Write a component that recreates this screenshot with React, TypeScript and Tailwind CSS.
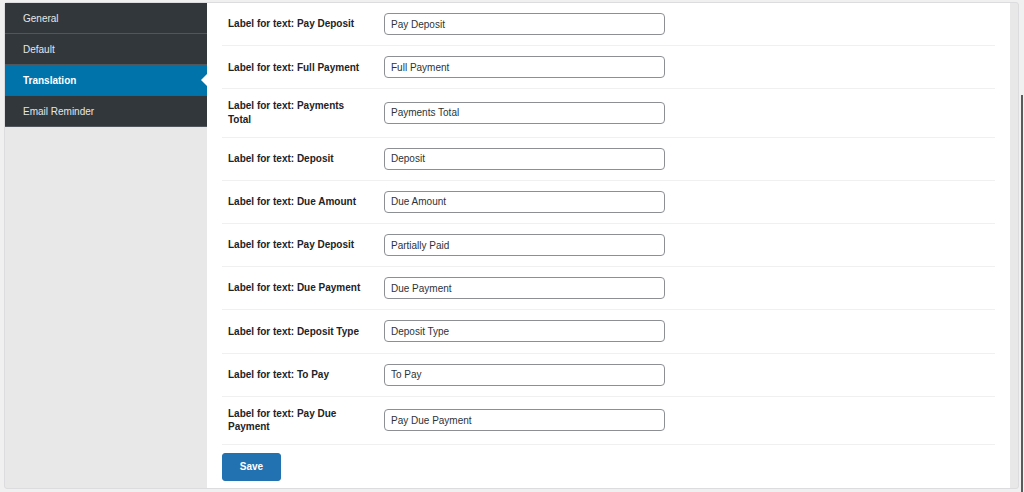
import React from 'react';

const tabs = ['General', 'Default', 'Translation', 'Email Reminder'];

const rows: Array<{ label: string; value: string }> = [
  { label: 'Label for text: Pay Deposit', value: 'Pay Deposit' },
  { label: 'Label for text: Full Payment', value: 'Full Payment' },
  { label: 'Label for text: Payments Total', value: 'Payments Total' },
  { label: 'Label for text: Deposit', value: 'Deposit' },
  { label: 'Label for text: Due Amount', value: 'Due Amount' },
  { label: 'Label for text: Pay Deposit', value: 'Partially Paid' },
  { label: 'Label for text: Due Payment', value: 'Due Payment' },
  { label: 'Label for text: Deposit Type', value: 'Deposit Type' },
  { label: 'Label for text: To Pay', value: 'To Pay' },
  { label: 'Label for text: Pay Due Payment', value: 'Pay Due Payment' },
];

export default function App() {
  return (
    <div
      className="relative h-[492px] overflow-hidden bg-[#f0f0f1] pt-[2px] pl-[4px] pr-[5px] text-[10px]"
      style={{ fontFamily: '"Liberation Sans", Arial, sans-serif' }}
    >
      {/* Settings box */}
      <div className="flex h-[487px] rounded-[3px] border border-[#dcdcde] bg-[#e8e8e8] pr-[8px]">
        {/* Sidebar tabs */}
        <div className="w-[202px] flex-shrink-0">
          {tabs.map((t) => (
            <div
              key={t}
              className={`relative flex h-[31px] items-center border-b border-[#50565c] pl-[18px] ${
                t === 'Translation' ? 'bg-[#0073aa] font-bold text-white' : 'bg-[#32373c] text-[#e6e6e6]'
              }`}
            >
              {t}
              {t === 'Translation' && (
                <span className="absolute right-0 top-1/2 h-0 w-0 -translate-y-1/2 border-y-[6px] border-r-[6px] border-y-transparent border-r-white" />
              )}
            </div>
          ))}
        </div>

        {/* Content panel */}
        <div className="flex flex-1 flex-col bg-white px-[15px]">
          {rows.map((r, i) => (
            <div key={i} className="flex items-center border-b border-[#f0f0f1] py-[10.1px]">
              <div className="w-[162px] flex-shrink-0 pl-[6px]">
                <div className="w-[140px] font-bold leading-[13.5px] text-[#1d2327]">{r.label}</div>
              </div>
              <input
                type="text"
                defaultValue={r.value}
                className="h-[22px] w-[281px] rounded-[4px] border border-[#8c8f94] bg-white px-[6px] text-[10px] text-[#2c3338] outline-none"
              />
            </div>
          ))}
          <div className="pt-[8px]">
            <button className="h-[28px] w-[59px] rounded-[3px] border border-[#2271b1] bg-[#2271b1] text-[10px] font-bold text-white">
              Save
            </button>
          </div>
        </div>
      </div>

      {/* scrollbar edge */}
      <div className="absolute right-[1px] top-[95px] bottom-0 w-[2px] bg-[#5a5a5a]" />
    </div>
  );
}
